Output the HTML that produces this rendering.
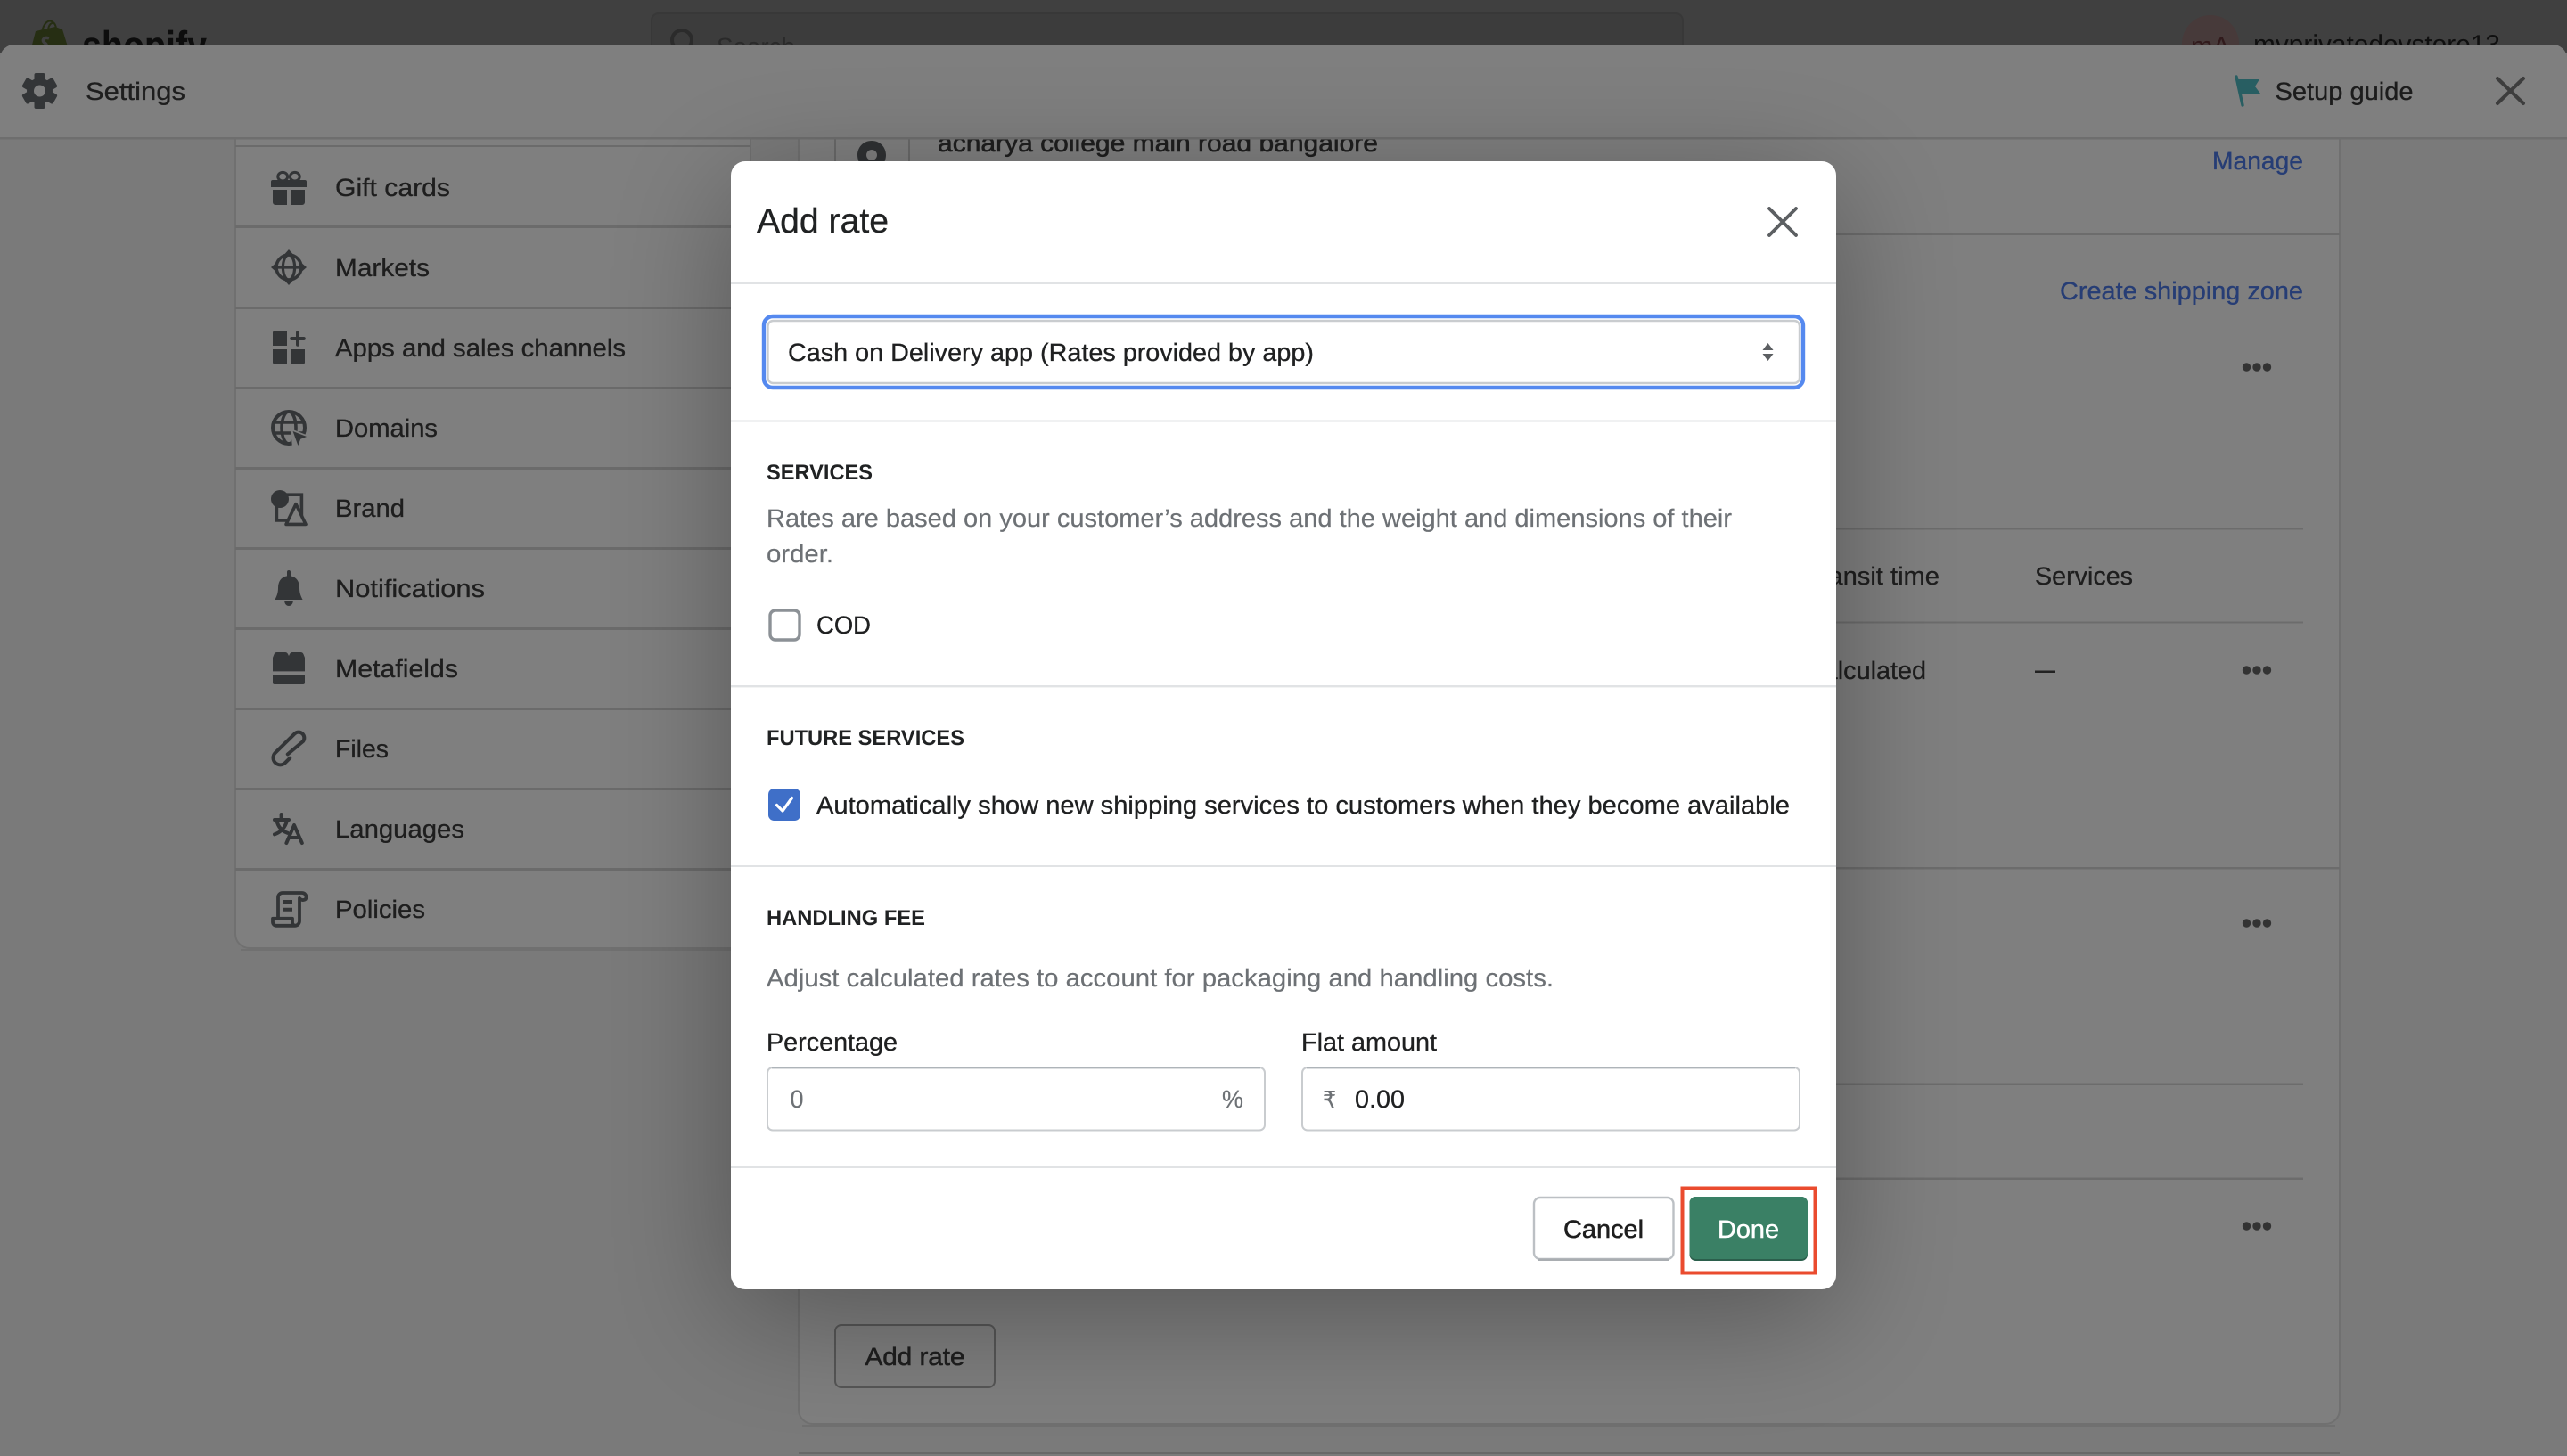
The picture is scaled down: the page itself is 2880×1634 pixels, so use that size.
<!DOCTYPE html>
<html lang="en"><head><meta charset="utf-8"><title>Add rate</title>
<style>
html,body{margin:0;padding:0;background:#7a7a7a;width:2880px;height:1634px;overflow:hidden}
svg{display:block}
text{font-family:"Liberation Sans","DejaVu Sans",sans-serif;font-size:28px;fill:#1e1e1e;stroke:#1e1e1e;stroke-width:.3px;text-rendering:geometricPrecision}
.m{stroke:#202020;stroke-width:.55px}
.g{fill:#6d7175;stroke:#6d7175;stroke-width:.2px}
.h{font-size:24px;font-weight:700;fill:#202223;stroke:none}
.b{fill:#263d75;stroke:#263d75;stroke-width:.35px}
.d{fill:#1f2021;stroke:#1f2021}
.ic{fill:#333537}
.st{fill:none;stroke:#333537}
</style></head><body>
<svg xmlns="http://www.w3.org/2000/svg" width="2880" height="1634" viewBox="0 0 2880 1634" lengthAdjust="spacingAndGlyphs">
<defs>
<filter id="sh" filterUnits="userSpaceOnUse" x="300" y="-200" width="2300" height="2200"><feDropShadow dx="0" dy="30" stdDeviation="70" flood-color="#000" flood-opacity=".32"/></filter>
<clipPath id="below"><rect x="0" y="155" width="2880" height="1479"/></clipPath>
</defs>

<!-- Top bar -->
<rect width="2880" height="60" fill="#404040"/>
<path d="M33 62 L40 35 L62 30 L70 33 L79 62Z" fill="#262e13"/>
<path d="M47 36 C49 26 54 22 58 24 C62 26 63 30 63 33 M54 33 C55 27 58 25 61 26" fill="none" stroke="#262e13" stroke-width="2"/>
<path d="M55 43 C50 41 46 45 50 48 C53 50 53 52 50 54" fill="none" stroke="#3f3f3f" stroke-width="3.5"/>
<text x="92" y="67" font-size="46" font-weight="700" style="font-size:46px;fill:#0d0d0d;stroke:none" textLength="140" lengthAdjust="spacingAndGlyphs">shopify</text>
<rect x="731" y="15" width="1157" height="60" rx="8" fill="#3c3c3c" stroke="#383838" stroke-width="2"/>
<circle cx="765" cy="45" r="11" fill="none" stroke="#2b2b2b" stroke-width="4"/>
<text x="804" y="62" style="fill:#2a2a2a;stroke:none" textLength="88" lengthAdjust="spacingAndGlyphs">Search</text>
<circle cx="2480" cy="49" r="32" fill="#473a3a"/>
<text x="2458" y="61" style="fill:#311a1c;stroke:none" textLength="44" lengthAdjust="spacingAndGlyphs">mA</text>
<text x="2528" y="60" style="font-size:30px;fill:#101010;stroke:none" textLength="277" lengthAdjust="spacingAndGlyphs">myprivatedevstore13</text>

<!-- Settings panel -->
<path d="M0 66 a16 16 0 0 1 16 -16 H2864 a16 16 0 0 1 16 16 V1634 H0Z" fill="#7a7a7a"/>

<!-- Sidebar card -->
<path d="M264 150 H842 V1064 H280 a16 16 0 0 1 -16 -16Z" fill="#7f7f7f" stroke="#707070" stroke-width="2"/>
<g fill="#6b6b6b">
<rect x="264" y="163" width="578" height="2"/><rect x="264" y="253" width="578" height="3"/><rect x="264" y="344" width="578" height="3"/><rect x="264" y="434" width="578" height="3"/><rect x="264" y="524" width="578" height="3"/><rect x="264" y="614" width="578" height="3"/><rect x="264" y="704" width="578" height="3"/><rect x="264" y="794" width="578" height="3"/><rect x="264" y="884" width="578" height="3"/><rect x="264" y="974" width="578" height="3"/>
</g>
<rect x="270" y="1065" width="570" height="2" fill="#707070"/>

<g transform="translate(0 .8)">
<text x="376" y="219" textLength="129" lengthAdjust="spacingAndGlyphs">Gift cards</text>
<text x="376" y="309" textLength="106" lengthAdjust="spacingAndGlyphs">Markets</text>
<text x="376" y="399" textLength="326" lengthAdjust="spacingAndGlyphs">Apps and sales channels</text>
<text x="376" y="489" textLength="115" lengthAdjust="spacingAndGlyphs">Domains</text>
<text x="376" y="579" textLength="78" lengthAdjust="spacingAndGlyphs">Brand</text>
<text x="376" y="669" textLength="168" lengthAdjust="spacingAndGlyphs">Notifications</text>
<text x="376" y="759" textLength="138" lengthAdjust="spacingAndGlyphs">Metafields</text>
<text x="376" y="849" textLength="60" lengthAdjust="spacingAndGlyphs">Files</text>
<text x="376" y="939" textLength="145" lengthAdjust="spacingAndGlyphs">Languages</text>
<text x="376" y="1029" textLength="101" lengthAdjust="spacingAndGlyphs">Policies</text>
</g>

<!-- Sidebar icons (20 unit grid) -->
<g transform="translate(304 190) scale(2)">
<path class="ic" d="M0 7 a1 1 0 0 1 1 -1 H19 a1 1 0 0 1 1 1 V10 H0Z M1 11.5 H9 V20 H2.5 A1.5 1.5 0 0 1 1 18.5Z M11 11.5 H19 V18.5 A1.5 1.5 0 0 1 17.5 20 H11Z"/>
<ellipse class="st" cx="6.6" cy="4.1" rx="2.7" ry="2.4" stroke-width="1.5"/><ellipse class="st" cx="13.4" cy="4.1" rx="2.7" ry="2.4" stroke-width="1.5"/>
</g>
<g transform="translate(304 280) scale(2)">
<circle class="st" cx="10" cy="10" r="7" stroke-width="1.8"/>
<ellipse class="st" cx="10" cy="10" rx="3.3" ry="7" stroke-width="1.6"/>
<path class="st" d="M3 10 H17" stroke-width="1.6"/>
<path class="ic" d="M10 0 L13 3.4 H7Z M10 20 L13 16.6 H7Z M0 10 L3.4 7 V13Z M20 10 L16.6 7 V13Z"/>
</g>
<g transform="translate(304 370) scale(2)">
<path class="ic" d="M1.5 1 H9 V9 H1 V1.5 A.5 .5 0 0 1 1.5 1Z M1 11 H9 V19 H1.5 A.5 .5 0 0 1 1 18.5Z M11 11 H19 V18.5 A.5 .5 0 0 1 18.5 19 H11Z M14 1.6 a1 1 0 0 1 2 0 V4 H18.4 a1 1 0 0 1 0 2 H16 V8.4 a1 1 0 0 1 -2 0 V6 H11.6 a1 1 0 0 1 0 -2 H14Z"/>
</g>
<g transform="translate(304 460) scale(2)">
<circle class="st" cx="10" cy="10" r="9" stroke-width="2"/>
<ellipse class="st" cx="10" cy="10" rx="4" ry="9" stroke-width="1.8"/>
<path class="st" d="M1.5 7 H18.5 M1.5 13 H18.5" stroke-width="1.8"/>
<path d="M11 10.5 L21 14.5 L21 21 L12 21Z" fill="#7f7f7f"/>
<path class="ic" d="M12.3 12 L20 15 L16.6 16.4 L15.2 20Z"/>
</g>
<g transform="translate(304 550) scale(2)">
<path class="st" d="M6 2.6 H17.2 V17 H3.2 V8" stroke-width="1.8"/>
<circle class="ic" cx="5" cy="5" r="5"/>
<path d="M14 7.8 L19.5 19.2 H8.5Z" fill="#7f7f7f" stroke="#333537" stroke-width="1.8" stroke-linejoin="round"/>
</g>
<g transform="translate(304 640) scale(2)">
<path class="ic" d="M9 1 a1 1 0 0 1 2 0 V3.2 C14.5 3.8 16 6.5 16 10 C16 13 17 15 17.8 16.5 H2.2 C3 15 4 13 4 10 C4 6.5 5.5 3.8 9 3.2Z M7.6 17.5 H12.4 C12.2 19.2 11 20 10 20 C9 20 7.8 19.2 7.6 17.5Z"/>
</g>
<g transform="translate(304 730) scale(2)">
<path class="ic" d="M1 4 L1.8 2 Q2.2 1 3.4 1 H8 Q9 1 9.5 2 L10 3 L10.5 2 Q11 1 12 1 H16.6 Q17.8 1 18.2 2 L19 4 V11.7 H1Z M1 13.5 H19 V18 a1 1 0 0 1 -1 1 H2 a1 1 0 0 1 -1 -1Z"/>
</g>
<g transform="translate(304 820) scale(2)">
<path class="st" d="M9.4 13.2 L18 6 A3.2 3.2 0 0 0 13.4 1.6 L2.4 12.4 A3.9 3.9 0 0 0 8 18 L10.6 15.4" stroke-width="2" stroke-linecap="round"/>
</g>
<g transform="translate(304 910) scale(2)">
<path class="st" d="M2 5 H10 M5.8 2 V5 M3.2 5.4 C4 9 6.3 11.4 9.3 12.4 M9 5.4 C8 9.4 5.4 12 2 13.2 M8.7 18 L13 8 L17.4 18 M10.2 15 H16" stroke-width="2" stroke-linecap="round" stroke-linejoin="round"/>
</g>
<g transform="translate(304 1000) scale(2)">
<path class="st" d="M4 15 V3.5 A2.5 2.5 0 0 1 6.5 1 H17.5 A2.3 2.3 0 0 1 19.4 4.5 A2.3 2.3 0 0 1 16 4 V17 A2.6 2.6 0 0 1 13.4 19.4 H3 A2 2 0 0 1 1 17.4 V15.4 H12 V17.8 A1.7 1.7 0 0 0 14 19.3" stroke-width="1.9" stroke-linejoin="round"/>
<path class="ic" d="M7 5 H12 V7 H7Z M7 9.4 H12 V11.4 H7Z"/>
</g>

<!-- Main card -->
<path d="M896 150 H2625 V1582 a16 16 0 0 1 -16 16 H912 a16 16 0 0 1 -16 -16Z" fill="#7f7f7f" stroke="#707070" stroke-width="2"/>
<rect x="900" y="1599" width="1720" height="2" fill="#707070"/>
<rect x="896" y="1629" width="1729" height="3" fill="#686868"/>
<g clip-path="url(#below)">
<path d="M937 150 V190 M1020 150 V190" stroke="#696969" stroke-width="2"/>
<path fill-rule="evenodd" d="M978 158 C988 158 994 166 994 174 C994 184 984 196 978 200 C972 196 962 184 962 174 C962 166 968 158 978 158Z M978 168 a6 6 0 1 0 .01 0Z" fill="#2f3133"/>
<text x="1052" y="170" class="m" textLength="494" lengthAdjust="spacingAndGlyphs">acharya college main road bangalore</text>
</g>
<text x="2482" y="190" class="b" textLength="102" lengthAdjust="spacingAndGlyphs">Manage</text>
<rect x="897" y="262" width="1728" height="2" fill="#6c6c6c"/>
<text x="2311" y="336" class="b" textLength="273" lengthAdjust="spacingAndGlyphs">Create shipping zone</text>
<g fill="#333"><circle cx="2520.5" cy="412" r="4.7"/><circle cx="2532" cy="412" r="4.7"/><circle cx="2543.5" cy="412" r="4.7"/><circle cx="2520.5" cy="752" r="4.7"/><circle cx="2532" cy="752" r="4.7"/><circle cx="2543.5" cy="752" r="4.7"/><circle cx="2520.5" cy="1036" r="4.7"/><circle cx="2532" cy="1036" r="4.7"/><circle cx="2543.5" cy="1036" r="4.7"/><circle cx="2520.5" cy="1376" r="4.7"/><circle cx="2532" cy="1376" r="4.7"/><circle cx="2543.5" cy="1376" r="4.7"/></g>
<rect x="937" y="592.5" width="1647" height="2" fill="#6c6c6c"/>
<rect x="937" y="697.5" width="1647" height="2" fill="#6c6c6c"/>
<text x="2025" y="656" textLength="151" lengthAdjust="spacingAndGlyphs">Transit time</text>
<text x="2283" y="656" textLength="110" lengthAdjust="spacingAndGlyphs">Services</text>
<text x="2025" y="762" textLength="136" lengthAdjust="spacingAndGlyphs">Calculated</text>
<rect x="2283" y="752.5" width="23" height="2.5" fill="#222"/>
<rect x="897" y="973" width="1728" height="2.5" fill="#6c6c6c"/>
<rect x="937" y="1215.5" width="1647" height="2.5" fill="#6c6c6c"/>
<rect x="937" y="1321.5" width="1647" height="2.5" fill="#6c6c6c"/>
<rect x="937" y="1487" width="179" height="70" rx="7" fill="#7e7e7e" stroke="#565656" stroke-width="2"/>
<text x="970.5" y="1532" class="m" textLength="112" lengthAdjust="spacingAndGlyphs">Add rate</text>

<!-- Settings header -->
<path d="M0 66 a16 16 0 0 1 16 -16 H2864 a16 16 0 0 1 16 16 V155 H0Z" fill="#7f7f7f"/>
<rect x="0" y="154" width="2880" height="2.5" fill="#6e6e6e"/>
<g transform="translate(44.5 102)">
<g class="ic"><rect x="-6" y="-20" width="12" height="40" rx="2"/><rect x="-6" y="-20" width="12" height="40" rx="2" transform="rotate(60)"/><rect x="-6" y="-20" width="12" height="40" rx="2" transform="rotate(120)"/></g>
<circle r="14.5" class="ic"/><circle r="6.5" fill="#7f7f7f"/>
</g>
<text x="96" y="112" textLength="112" lengthAdjust="spacingAndGlyphs">Settings</text>
<path d="M2509 86 L2516 118" stroke="#285e62" stroke-width="3.4" stroke-linecap="round"/>
<path d="M2510 89 H2535 L2530 97 L2536 105 H2513Z" fill="#285e62"/>
<text x="2552.5" y="112" style="fill:#1c1c1c;stroke:#1c1c1c" textLength="155" lengthAdjust="spacingAndGlyphs">Setup guide</text>
<path d="M2802 88 L2831 116 M2831 88 L2802 116" stroke="#3d3d3d" stroke-width="4" stroke-linecap="round"/>

<!-- Modal -->
<rect x="820" y="181" width="1240" height="1266" rx="16" fill="#fff" filter="url(#sh)"/>
<text x="849" y="261" style="font-size:39px;fill:#202223" textLength="148" lengthAdjust="spacingAndGlyphs">Add rate</text>
<path d="M1985 234 L2015 264 M2015 234 L1985 264" stroke="#5c5f62" stroke-width="3.8" stroke-linecap="round"/>
<rect x="820" y="317" width="1240" height="2" fill="#e1e3e5"/>

<rect x="857" y="355" width="1166" height="80" rx="10" fill="#fff" stroke="#5589ef" stroke-width="4.4"/>
<rect x="861.5" y="360" width="1157.5" height="70" rx="6" fill="#fff" stroke="#c9cccf" stroke-width="2.4"/>
<text x="884" y="405" class="d" textLength="590" lengthAdjust="spacingAndGlyphs">Cash on Delivery app (Rates provided by app)</text>
<path d="M1983.5 385 L1989.5 393 H1977.5Z M1983.5 405 L1989.5 397 H1977.5Z" fill="#5c5f62"/>
<rect x="820" y="471.5" width="1240" height="2" fill="#e1e3e5"/>

<text x="860" y="538" class="h" textLength="119" lengthAdjust="spacingAndGlyphs">SERVICES</text>
<text x="860" y="591" class="g" textLength="1083" lengthAdjust="spacingAndGlyphs">Rates are based on your customer’s address and the weight and dimensions of their</text>
<text x="860" y="631" class="g" textLength="75" lengthAdjust="spacingAndGlyphs">order.</text>
<rect x="864" y="685" width="33" height="33" rx="6" fill="#fff" stroke="#8c9196" stroke-width="3.4"/>
<text x="916" y="711" class="d" textLength="61" lengthAdjust="spacingAndGlyphs">COD</text>
<rect x="820" y="769" width="1240" height="2.4" fill="#e1e3e5"/>

<text x="860" y="836" class="h" textLength="222" lengthAdjust="spacingAndGlyphs">FUTURE SERVICES</text>
<rect x="862" y="885" width="36" height="36" rx="6.5" fill="#3f6fc8"/>
<path d="M871.5 903.5 L878 910 L888.5 895.5" fill="none" stroke="#fff" stroke-width="3.2" stroke-linecap="round" stroke-linejoin="round"/>
<text x="916" y="913" class="d" textLength="1092" lengthAdjust="spacingAndGlyphs">Automatically show new shipping services to customers when they become available</text>
<rect x="820" y="971" width="1240" height="2" fill="#e1e3e5"/>

<text x="860" y="1038" class="h" textLength="178" lengthAdjust="spacingAndGlyphs">HANDLING FEE</text>
<text x="860" y="1107" class="g" textLength="883" lengthAdjust="spacingAndGlyphs">Adjust calculated rates to account for packaging and handling costs.</text>
<text x="860" y="1179" class="d" textLength="147" lengthAdjust="spacingAndGlyphs">Percentage</text>
<text x="1460" y="1179" class="d" textLength="152" lengthAdjust="spacingAndGlyphs">Flat amount</text>

<rect x="861" y="1198" width="558" height="70.5" rx="6" fill="#fff" stroke="#c9cccf" stroke-width="2"/>
<rect x="866" y="1197" width="548" height="2.4" fill="#aeb4b9"/>
<rect x="1461" y="1198" width="558" height="70.5" rx="6" fill="#fff" stroke="#c9cccf" stroke-width="2"/>
<rect x="1466" y="1197" width="548" height="2.4" fill="#aeb4b9"/>
<text x="886.5" y="1243" class="g" textLength="15" lengthAdjust="spacingAndGlyphs">0</text>
<text x="1371" y="1243" class="g" textLength="24" lengthAdjust="spacingAndGlyphs">%</text>
<text x="1484" y="1243" class="g" style="font-size:26px" textLength="15" lengthAdjust="spacingAndGlyphs">₹</text>
<text x="1520" y="1243" class="d" textLength="56" lengthAdjust="spacingAndGlyphs">0.00</text>
<rect x="820" y="1309" width="1240" height="2" fill="#e1e3e5"/>

<rect x="1721" y="1344" width="156.5" height="69" rx="7" fill="#fff" stroke="#bcc0c4" stroke-width="2.4"/>
<rect x="1726" y="1412.5" width="146" height="2.5" fill="#a9adb1"/>
<text x="1754" y="1389" class="m" textLength="90" lengthAdjust="spacingAndGlyphs">Cancel</text>
<rect x="1895.5" y="1343" width="132.5" height="72" rx="7" fill="#2b5f4c"/>
<path d="M1895.5 1350 a7 7 0 0 1 7 -7 H2021 a7 7 0 0 1 7 7 V1406 a7 7 0 0 1 -7 7 H1902.5 a7 7 0 0 1 -7 -7Z" fill="#3a8065"/>
<text x="1927" y="1389" style="fill:#fff;stroke:#fff;stroke-width:.45px" textLength="69" lengthAdjust="spacingAndGlyphs">Done</text>
<rect x="1887.5" y="1333.5" width="149" height="95" fill="none" stroke="#ea4b2e" stroke-width="4"/>
</svg>
</body></html>
